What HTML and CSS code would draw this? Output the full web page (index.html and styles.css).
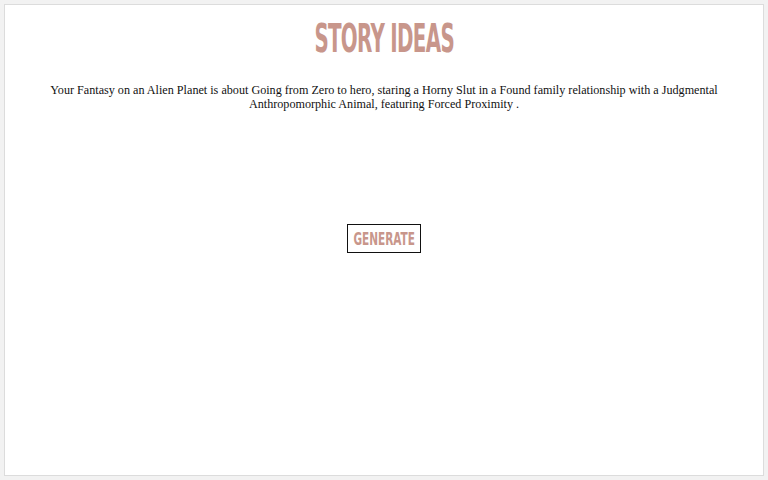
FILE: index.html
```html
<!DOCTYPE html>
<html lang="en">
<head>
<meta charset="utf-8">
<title>Story Ideas</title>
<link rel="stylesheet" href="styles.css">
</head>
<body>
  <main class="card">
    <h1 class="title"><span>STORY IDEAS</span></h1>
    <p class="idea">Your Fantasy on an Alien Planet is about Going from Zero to hero, staring a Horny Slut in a Found family relationship with a Judgmental Anthropomorphic Animal, featuring Forced Proximity .</p>
    <div class="actions">
      <button class="generate" type="button"><span>GENERATE</span></button>
    </div>
  </main>
</body>
</html>
```
FILE: styles.css
```css
html, body {
  margin: 0;
  padding: 0;
  background: #f2f2f2;
}

body {
  padding: 4px;
  box-sizing: border-box;
  height: 480px;
}

.card {
  box-sizing: border-box;
  height: 472px;
  width: 760px;
  background: #ffffff;
  border: 1px solid #dcdcdc;
  display: flex;
  flex-direction: column;
  align-items: center;
}

.title {
  margin: 14px 0 0 0;
  font-family: "DejaVu Sans Condensed", "DejaVu Sans", sans-serif;
  font-weight: bold;
  font-size: 32px;
  line-height: 40px;
  color: #c8968b;
  letter-spacing: -1px;
}

.title span {
  display: inline-block;
  transform: scale(0.69, 1.22);
}

.idea {
  margin: 24px 40px 0 40px;
  font-family: "Liberation Serif", "Times New Roman", serif;
  font-size: 12.15px;
  line-height: 14px;
  text-align: center;
  color: #111;
}

.actions {
  margin-top: 113px;
}

.generate {
  background: #fff;
  border: 1px solid #111;
  padding: 0;
  width: 74px;
  height: 29px;
  font-family: "DejaVu Sans Condensed", "DejaVu Sans", sans-serif;
  font-weight: bold;
  font-size: 13px;
  white-space: nowrap;
  color: #c8968b;
  cursor: pointer;
}

.generate span {
  display: inline-block;
  transform: scale(0.9, 1.38);
}
```
